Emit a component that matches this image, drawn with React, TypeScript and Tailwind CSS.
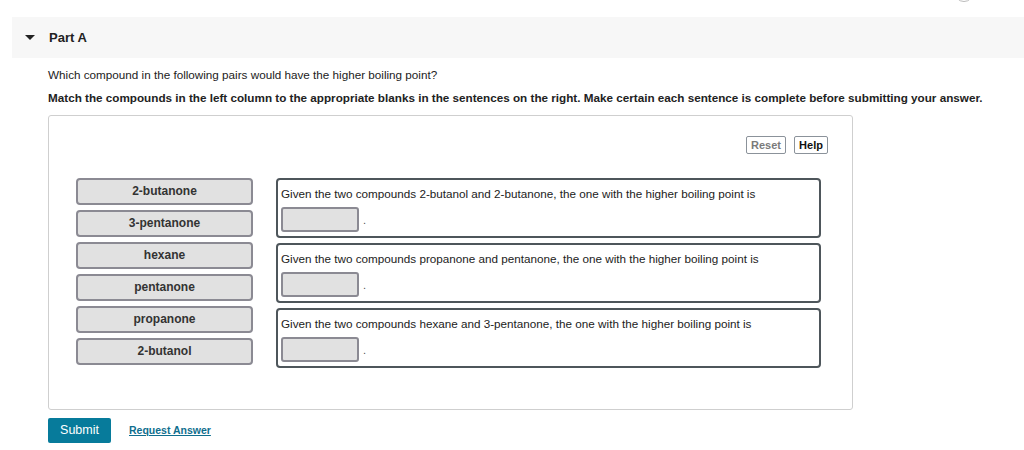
import React from "react";

const items = ["2-butanone", "3-pentanone", "hexane", "pentanone", "propanone", "2-butanol"];
const sentences = [
  "Given the two compounds 2-butanol and 2-butanone, the one with the higher boiling point is",
  "Given the two compounds propanone and pentanone, the one with the higher boiling point is",
  "Given the two compounds hexane and 3-pentanone, the one with the higher boiling point is",
];

export default function App() {
  return (
    <div
      className="relative w-[1024px] h-[450px] bg-white overflow-hidden text-[#222]"
      style={{ fontFamily: '"Liberation Sans", Arial, sans-serif' }}
    >
      <div className="absolute left-[954px] top-[-18px] w-[20px] h-[20px] rounded-full border border-[#bbb]" />
      <div className="pt-[17px]">
        <div className="ml-[12px] h-[41px] bg-[#f7f7f7] flex items-center">
          <div className="ml-[13px] w-0 h-0 border-l-[5px] border-r-[5px] border-t-[5px] border-l-transparent border-r-transparent border-t-[#222]" />
          <div className="ml-[14px] text-[13px] font-bold leading-[14px] text-[#222]">Part A</div>
        </div>
      </div>
      <div className="pl-[48px]">
        <div className="mt-[10px] text-[11.7px] leading-[14px] text-[#222]">
          Which compound in the following pairs would have the higher boiling point?
        </div>
        <div className="mt-[9px] text-[11.7px] leading-[14px] font-bold text-[#222]">
          Match the compounds in the left column to the appropriate blanks in the sentences on the right. Make certain each sentence is complete before submitting your answer.
        </div>
        <div className="mt-[10px] w-[805px] h-[295px] border border-[#cfcfcf] rounded-[3px] flex flex-col">
          <div className="mt-[20px] mr-[24px] flex justify-end gap-[8px]">
            <div className="w-[40px] h-[18px] border border-[#8b929a] rounded-[2px] flex items-center justify-center text-[11px] font-bold text-[#7a7a7a]">
              Reset
            </div>
            <div className="w-[34px] h-[18px] border border-[#8b929a] rounded-[2px] flex items-center justify-center text-[11px] font-bold text-[#111]">
              Help
            </div>
          </div>
          <div className="mt-[24px] ml-[27px] flex gap-[23px]">
            <div className="flex flex-col gap-[5px]">
              {items.map((it) => (
                <div
                  key={it}
                  className="w-[177px] h-[27px] bg-[#e1e1e1] border-2 border-[#8b8a93] rounded-[4px] pt-[4px] text-center text-[12px] leading-[14px] font-bold text-[#333]"
                >
                  {it}
                </div>
              ))}
            </div>
            <div className="flex flex-col gap-[5px]">
              {sentences.map((s) => (
                <div
                  key={s}
                  className="w-[545px] h-[60px] border-2 border-[#4e565b] rounded-[4px] pl-[3px] pt-[7px]"
                >
                  <div className="text-[11.7px] leading-[14px] text-[#222]">{s}</div>
                  <div className="mt-[6px] flex items-end">
                    <div className="w-[78px] h-[25px] bg-[#e1e1e1] border-2 border-[#8b8a93] rounded-[3px]" />
                    <span className="ml-[4px] mb-[6px] text-[11px] leading-[12px] text-[#555]">.</span>
                  </div>
                </div>
              ))}
            </div>
          </div>
        </div>
        <div className="mt-[8px] flex items-center">
          <div className="w-[63px] h-[25px] bg-[#077b9b] rounded-[2px] flex items-center justify-center text-[12.5px] text-white">
            Submit
          </div>
          <div className="ml-[18px] text-[10.5px] font-bold text-[#0f6e8e] underline">Request Answer</div>
        </div>
      </div>
    </div>
  );
}
